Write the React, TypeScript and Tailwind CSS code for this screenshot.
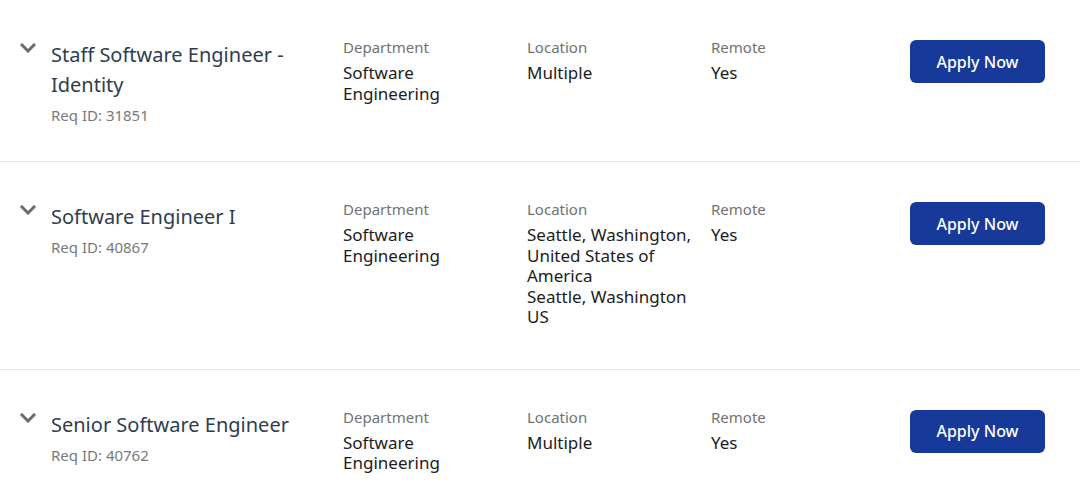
import React from "react";

type Job = {
  title: string;
  req: string;
  dept: string;
  location: string[];
  remote: string;
};

const jobs: Job[] = [
  {
    title: "Staff Software Engineer - Identity",
    req: "31851",
    dept: "Software Engineering",
    location: ["Multiple"],
    remote: "Yes",
  },
  {
    title: "Software Engineer I",
    req: "40867",
    dept: "Software Engineering",
    location: ["Seattle, Washington, United States of America", "Seattle, Washington US"],
    remote: "Yes",
  },
  {
    title: "Senior Software Engineer",
    req: "40762",
    dept: "Software Engineering",
    location: ["Multiple"],
    remote: "Yes",
  },
];

function Chevron() {
  return (
    <svg width="16" height="10" viewBox="0 0 16 10" fill="none">
      <path d="M2 2 L8 8 L14 2" stroke="#6b6b6b" strokeWidth="3" strokeLinecap="square" />
    </svg>
  );
}

function Field({ label, children }: { label: string; children: React.ReactNode }) {
  return (
    <div className="w-[166px] mr-[18px] shrink-0">
      <div className="text-[15px] leading-[18px] text-[#727272]">{label}</div>
      <div className="mt-[7px] pb-[6px] text-[17px] leading-[20.5px] text-[#1c1c1c]">{children}</div>
    </div>
  );
}

export default function App() {
  return (
    <div
      className="w-[1080px] h-[500px] overflow-hidden bg-white"
      style={{ fontFamily: '"Noto Sans", "Open Sans", sans-serif' }}
    >
      {jobs.map((job, i) => (
        <div
          key={job.req}
          className={`flex items-start pl-[20px] pr-[35px] pt-[38px] pb-[35px] ${
            i < jobs.length - 1 ? "border-b border-[#e6e6e6]" : ""
          }`}
        >
          <div className="w-[16px] shrink-0 mt-[5px]">
            <Chevron />
          </div>
          <div className="w-[272px] ml-[15px] mr-[20px] shrink-0">
            <div className="text-[20px] leading-[30px] text-[#2e3d4f] pt-[2px]">{job.title}</div>
            <div className="mt-[4px] text-[15px] leading-[22px] text-[#7a7a7a]">Req ID: {job.req}</div>
          </div>
          <Field label="Department">{job.dept}</Field>
          <Field label="Location">
            {job.location.map((l) => (
              <div key={l}>{l}</div>
            ))}
          </Field>
          <Field label="Remote">{job.remote}</Field>
          <button className="ml-auto mt-[2px] w-[135px] h-[43px] rounded-[6px] bg-[#17399a] text-white text-[16px] font-medium shrink-0">
            Apply Now
          </button>
        </div>
      ))}
    </div>
  );
}
